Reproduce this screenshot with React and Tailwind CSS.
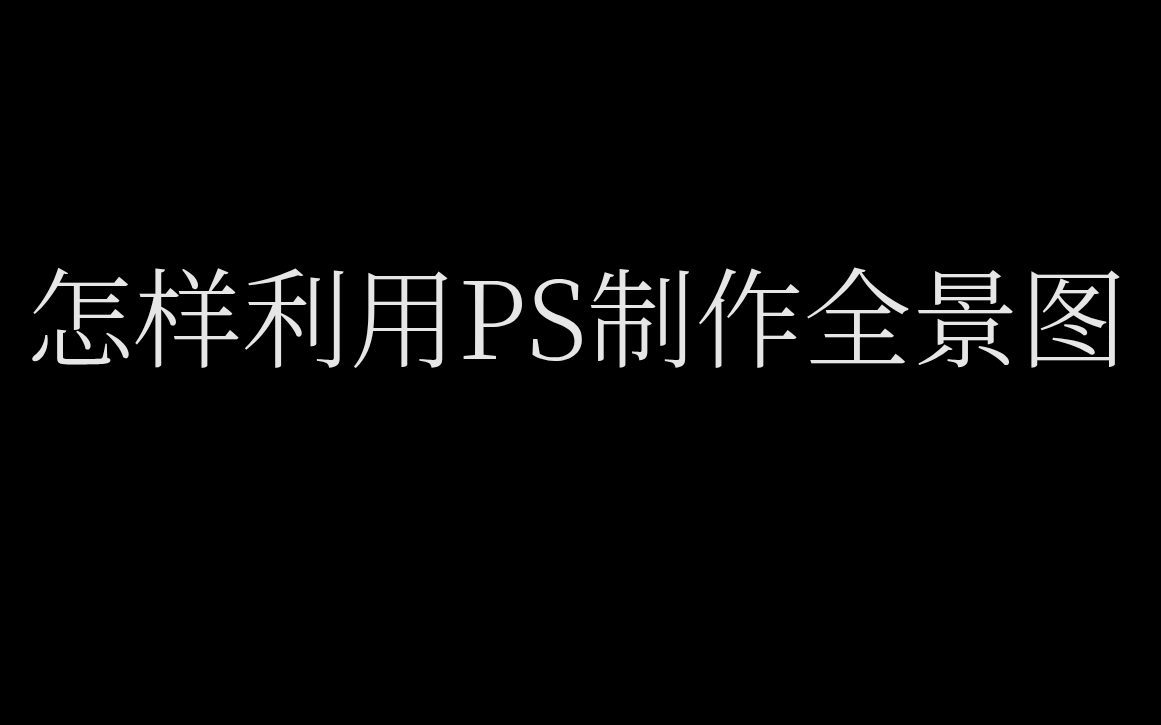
export default function App() {
  return (
    <div className="w-full h-[725px] bg-black flex justify-center pt-[250px] pr-2 overflow-hidden">
      <h1
        className="text-[108px] leading-[126px] text-[#e6e6e6] whitespace-nowrap font-light"
        style={{ fontFamily: '"Noto Serif CJK SC", "Liberation Serif", "Noto Sans CJK SC", serif' }}
      >
        怎样利用PS制作全景图
      </h1>
    </div>
  );
}
